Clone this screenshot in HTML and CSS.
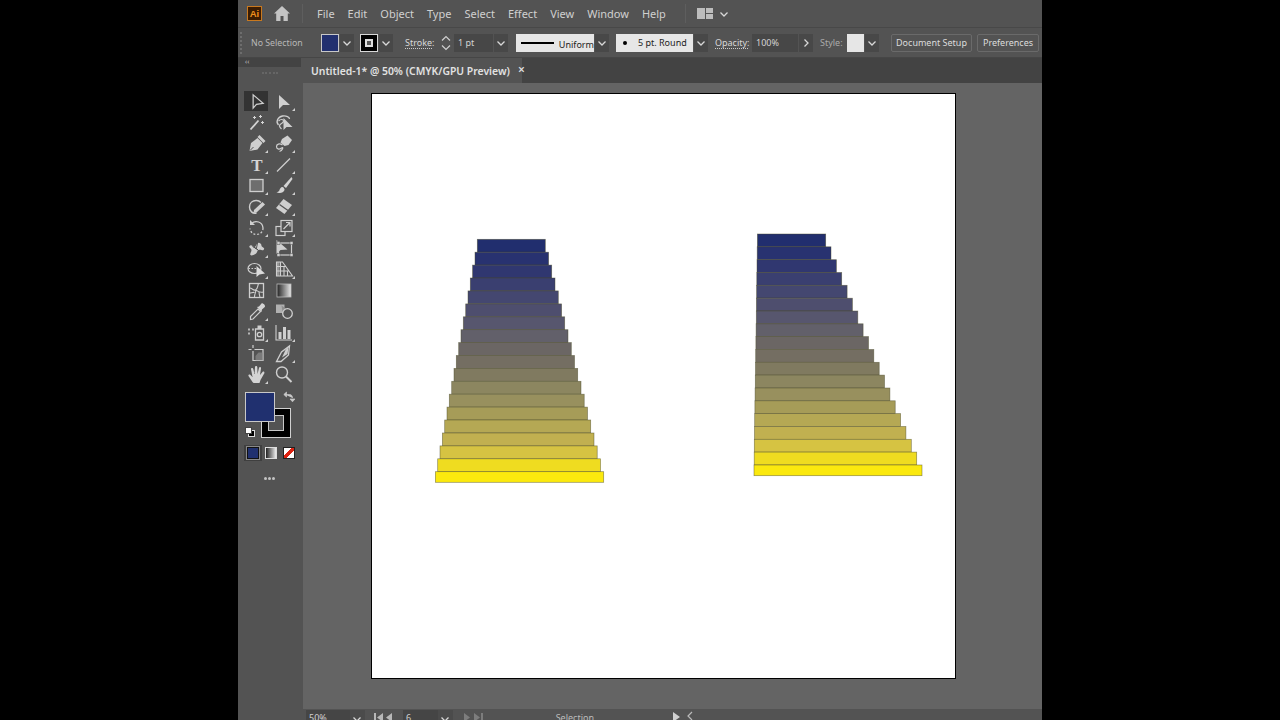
FILE: index.html
```html
<!DOCTYPE html>
<html lang="en">
<head>
<meta charset="utf-8">
<title>Adobe Illustrator</title>
<link rel="stylesheet" href="styles.css">
</head>
<body>
<svg class="defs" width="0" height="0" aria-hidden="true">
  <symbol id="chev" viewBox="0 0 14 14"><path d="M3.5 5.5 7 9l3.500-3.500" fill="none" stroke="#d8d8d8" stroke-width="1.300"/></symbol>
  <linearGradient id="grad"><stop offset="0" stop-color="#222"/><stop offset="1" stop-color="#e8e8e8"/></linearGradient>
</svg>
<div class="app">
  <header class="menubar">
    <div class="ai-logo">Ai</div>
    <svg class="home" viewBox="0 0 16 15"><path d="M8 0 0 7.500h2.200V15h4.300v-5h3v5h4.300V7.500H16z" fill="#c4c4c4"/></svg>
    <span class="vsep first"></span>
    <nav class="menu"><span>File</span><span>Edit</span><span>Object</span><span>Type</span><span>Select</span><span>Effect</span><span>View</span><span>Window</span><span>Help</span></nav>
    <span class="vsep second"></span>
    <svg class="layout" viewBox="0 0 16 11"><path d="M0 0h8v11H0zM9 0h7v5H9zM9 6h7v5H9z" fill="#bdbdbd"/></svg>
    <svg class="chev"><use href="#chev"/></svg>
  </header>

  <section class="controlbar">
    <span class="grip"></span>
    <span class="label nosel">No Selection</span>
    <span class="swatch fillswatch"></span>
    <span class="drop"><svg class="chev"><use href="#chev"/></svg></span>
    <span class="swatch strokeswatch"><i></i></span>
    <span class="drop"><svg class="chev"><use href="#chev"/></svg></span>
    <span class="label dotted strokelabel">Stroke:</span>
    <svg class="stepper" viewBox="0 0 12 18"><path d="M2 6.500 6 2.500l4 4M2 11.500l4 4 4-4" fill="none" stroke="#d0d0d0" stroke-width="1.200"/></svg>
    <span class="field w39">1 pt</span>
    <span class="drop"><svg class="chev"><use href="#chev"/></svg></span>
    <span class="lightbox uniform"><i class="strokeline"></i><span>Uniform</span></span>
    <span class="drop"><svg class="chev"><use href="#chev"/></svg></span>
    <span class="lightbox brush"><i class="dot"></i><span>5 pt. Round</span></span>
    <span class="drop"><svg class="chev"><use href="#chev"/></svg></span>
    <span class="label dotted opacity">Opacity:</span>
    <span class="field w45">100%</span>
    <span class="drop"><svg class="chev" viewBox="0 0 14 14"><path d="M5.500 3.500 9 7l-3.500 3.500" fill="none" stroke="#d8d8d8" stroke-width="1.300"/></svg></span>
    <span class="label stylelabel">Style:</span>
    <span class="swatch styleswatch"></span>
    <span class="drop"><svg class="chev"><use href="#chev"/></svg></span>
    <button class="btn docsetup">Document Setup</button>
    <button class="btn prefs">Preferences</button>
  </section>

  <div class="workspace">
    <aside class="tools">
      <div class="paneltop">‹‹</div>
      <div class="panelgrip"></div>
      <div class="toolgrid">
        <div class="tool active"><svg viewBox="-2.500 0 24 21"><path d="M6.500 4v14l3.500-4 7-1z" fill="none" stroke="#d0d0d0" stroke-width="1.300"/></svg></div>
        <div class="tool fly"><svg viewBox="-2.500 0 24 21"><path d="M5.500 4v14l4-4h7z" fill="#cfcfcf"/></svg></div>

        <div class="tool"><svg viewBox="-2.500 0 24 21"><path d="m4 17.500 8-9" stroke="#d4d4d4" stroke-width="1.800"/><path d="M8 4v3M6.500 5.500h3M14 3v3M12.500 4.500h3M16 9v3M14.500 10.500h3" stroke="#d4d4d4"/></svg></div>
        <div class="tool"><svg viewBox="-2.500 0 24 21"><path d="M5 13c-3-3-1-8 4-9 4-.5 7 1 7 3" fill="none" stroke="#cfcfcf" stroke-width="1.300"/><path d="M5 9c2-2 5-2 5 0 0 3-4 2-4 5 0 1 1 2 2 3" fill="none" stroke="#cfcfcf" stroke-width="1.200"/><path d="M10 6v12l3-3h6z" fill="#cfcfcf"/></svg></div>

        <div class="tool fly"><svg viewBox="-2.500 0 24 21"><path d="M3 18 4.500 10 11 5l5 5-5 6.500zM11 4l2-2 6 6-2 2z" fill="#cfcfcf"/><path d="m3.500 17.500 3.500-3.500" stroke="#535353"/></svg></div>
        <div class="tool fly"><svg viewBox="-2.500 0 24 21"><path d="M7 9.500 8.500 6 14 2.500 18.500 7 15 12l-4 1z" fill="#cfcfcf"/><path d="M9 12c-3-2-6-1-6 1.500S5.500 17 8 15s1 3-2 3.500" fill="none" stroke="#cfcfcf" stroke-width="1.200"/></svg></div>

        <div class="tool fly"><svg viewBox="-2.500 0 24 21"><text x="10.500" y="16.500" class="ticon">T</text></svg></div>
        <div class="tool fly"><svg viewBox="-2.500 0 24 21"><path d="m3.500 17.500 13-13" stroke="#cfcfcf" stroke-width="1.200"/></svg></div>

        <div class="tool fly"><svg viewBox="-2.500 0 24 21"><rect x="3.500" y="4.500" width="13" height="12" fill="#6e6e6e" stroke="#cfcfcf" stroke-width="1.300"/></svg></div>
        <div class="tool fly"><svg viewBox="-2.500 0 24 21"><path d="M18 2 10 11l2.500 2L19 4z" fill="#d4d4d4"/><path d="M9 12c-2 0-2.500 2-3 3-.5 1.500-1.500 2-3 2 2 1.500 7 1.500 8-2 .3-1-1-3-2-3z" fill="#d4d4d4"/></svg></div>

        <div class="tool fly"><svg viewBox="-2.500 0 24 21"><path d="M10 17c-4 1-7-2-7-6s3-6.500 7-6.500c2 0 3.500 1 4.500 2" fill="none" stroke="#cfcfcf" stroke-width="1.400"/><path d="m7 17 .5-3L16 6l2.500 2.500-8.500 8z" fill="#cfcfcf"/></svg></div>
        <div class="tool fly"><svg viewBox="-2.500 0 24 21"><path d="M10 3 18.500 9 11 18 2.500 12z" fill="#cfcfcf"/><path d="m6 8.500 8.500 6" stroke="#535353" stroke-width="1.200"/><path d="m4.500 12 6.500 4.500L16.500 9.700 10 5z" fill="none"/></svg></div>

        <div class="tool fly"><svg viewBox="-2.500 0 24 21"><path d="M5 6.500C9 3 16 4.500 16.500 11" fill="none" stroke="#cfcfcf" stroke-width="1.300"/><path d="M3.500 3v5h5z" fill="#cfcfcf"/><path d="M16.500 11c0 4-3 6.500-6.500 6.500S4 15 3.500 11.500" fill="none" stroke="#cfcfcf" stroke-width="1.300" stroke-dasharray="2 1.800"/></svg></div>
        <div class="tool fly"><svg viewBox="-2.500 0 24 21"><rect x="2.500" y="9.500" width="9" height="9" fill="none" stroke="#cfcfcf" stroke-width="1.200"/><rect x="7.500" y="3.500" width="11" height="11" fill="#535353" stroke="#cfcfcf" stroke-width="1.200"/><path d="m10 12 6-6M12.500 5.500h4v4" fill="none" stroke="#cfcfcf" stroke-width="1.200"/></svg></div>

        <div class="tool fly"><svg viewBox="-2.500 0 24 21"><path d="M3 8c2-2 3 1 5 1s2-5 5-4 1 3 3 4 2 2 1 3-3-1-5 0-1 3-3 4-4 2-5 1 1-3 1-5-3-2-2-4z" fill="#cfcfcf"/><path d="m6 8.500 4 2 3 3M11 5l-1 5" stroke="#535353"/></svg></div>
        <div class="tool"><svg viewBox="-2.500 0 24 21"><rect x="5" y="5" width="13" height="12" fill="none" stroke="#cfcfcf" stroke-width="1.200"/><path d="M3 2v14l4-4 7-.5z" fill="#cfcfcf"/><path d="M3.500 3.500h3v3h-3zM16.500 3.500h3v3h-3zM16.500 15.500h3v3h-3zM3.500 15.500h3v3h-3z" fill="#cfcfcf" stroke="#535353" stroke-width=".5"/></svg></div>

        <div class="tool fly"><svg viewBox="-2.500 0 24 21"><ellipse cx="8" cy="9.500" rx="6.500" ry="5" fill="none" stroke="#cfcfcf" stroke-width="1.200"/><path d="M2 9.500h12" stroke="#cfcfcf" stroke-dasharray="1.500 1.500"/><path d="M10 7v11l3-2.500 5.500-1z" fill="#dcdcdc"/></svg></div>
        <div class="tool fly"><svg viewBox="-2.500 0 24 21"><path d="M3 3v14h16L9 3zM3 7.500h9M3 12h13M7 3v14M10.500 8v9M14 12v5" fill="none" stroke="#cfcfcf" stroke-width="1.100"/><path d="M3 3h3v14H3z" fill="#cfcfcf" opacity=".55"/></svg></div>

        <div class="tool"><svg viewBox="-2.500 0 24 21"><rect x="3" y="3.500" width="14" height="14" fill="none" stroke="#cfcfcf" stroke-width="1.300"/><path d="M3 8c3 0 3.500 3 6 2s2-4 3-6.500M9 10c1 2-1 3-1 7M9 10c3 1 3 3 8 2M12.500 11.500c0 2 .5 4 1 6M3 13c2 0 3-1 5-.5" fill="none" stroke="#cfcfcf" stroke-width="1.100"/></svg></div>
        <div class="tool"><svg viewBox="-2.500 0 24 21"><rect x="3.500" y="4" width="14" height="13" fill="url(#grad)" stroke="#bbb" stroke-width=".8"/></svg></div>

        <div class="tool fly"><svg viewBox="-2.500 0 24 21"><path d="m4 15.500 7.500-7.500 2.500 2.500L6.500 18 4 18.500z" fill="none" stroke="#cfcfcf" stroke-width="1.200"/><path d="m10.500 6 2-.5 2.500-3c1-1 4.500 2 3.300 3.500l-2.800 2.500-.5 2.500z" fill="#d4d4d4"/></svg></div>
        <div class="tool"><svg viewBox="-2.500 0 24 21"><rect x="2.500" y="3.500" width="8.500" height="8.500" fill="#b0b0b0"/><path d="m8 4.500 5 3.500v6l-4-3z" fill="#8f8f8f"/><circle cx="14" cy="12.500" r="4.800" fill="#535353" stroke="#d0d0d0" stroke-width="1.300"/></svg></div>

        <div class="tool fly"><svg viewBox="-2.500 0 24 21"><path d="M1.500 6.500h2v2h-2zM5.500 6.500h2v2h-2zM1.500 10.500h2v2h-2z" fill="#cfcfcf" opacity=".8"/><path d="M9 7h8v11H9z" fill="none" stroke="#cfcfcf" stroke-width="1.300"/><path d="M11 3.500h4V7h-4z" fill="#cfcfcf"/><circle cx="13" cy="12.500" r="2.200" fill="none" stroke="#cfcfcf" stroke-width="1.300"/></svg></div>
        <div class="tool fly"><svg viewBox="-2.500 0 24 21"><path d="M2.500 3v15h16" fill="none" stroke="#cfcfcf" stroke-width="1.100"/><path d="M5 10h3v7H5zM9.500 5h3v12h-3zM14 8h3v9h-3z" fill="#cfcfcf"/></svg></div>

        <div class="tool"><svg viewBox="-2.500 0 24 21"><path d="M6.500 2v3M2 6.500h3M8 6.500h8.500v11H6.500V8" fill="none" stroke="#cfcfcf" stroke-width="1.200"/><path d="M12 9.500h4.500v8H9v-4.500" fill="#8c8c8c" opacity=".7"/></svg></div>
        <div class="tool fly"><svg viewBox="-2.500 0 24 21"><path d="M3 18.500 8 9l8-6-1 9-7.500 6.500z" fill="none" stroke="#cfcfcf" stroke-width="1.300"/><path d="M12 7l-3.500 7.500 5.500-3.500 1-7z" fill="#cfcfcf"/></svg></div>

        <div class="tool fly"><svg viewBox="-2.500 0 24 21"><path d="M6 18 2 12c-.5-1 1-2 2-1l2 2-1.500-8c0-1.500 2-1.500 2.300 0L8 10l.5-7c0-1.500 2.300-1.500 2.300 0l.2 7 1.500-6c.3-1.500 2.300-1 2 .5L13.500 11l2.500-3c1-1 2.500 0 1.700 1.500L14 16l-1 3H7z" fill="#d4d4d4"/></svg></div>
        <div class="tool"><svg viewBox="-2.500 0 24 21"><circle cx="8.500" cy="8.500" r="5.500" fill="none" stroke="#cfcfcf" stroke-width="1.400"/><path d="m12.500 12.500 5.500 5.500" stroke="#cfcfcf" stroke-width="2"/></svg></div>
      </div>

      <div class="fillstroke">
        <span class="strokebig"><i></i></span>
        <span class="fillbig"></span>
        <svg class="swap" viewBox="0 0 12 12"><path d="M2 3.500h4.500c2 0 3 1.500 3 3.500M.8 3.500 3.500 1v5zM9.500 10.800 7 8h5z" fill="#c8c8c8" stroke="#c8c8c8" stroke-width=".7"/></svg>
        <span class="defaults"><i></i><b></b></span>
      </div>

      <div class="modes">
        <span class="mode on"><i class="m1"></i></span>
        <span class="mode"><i class="m2"></i></span>
        <span class="mode"><i class="m3"></i></span>
      </div>
      <div class="more"><i></i><i></i><i></i></div>
    </aside>

    <main class="doc">
      <div class="tabs"><div class="tab"><span>Untitled-1* @ 50% (CMYK/GPU Preview)</span><em>×</em></div></div>
      <div class="canvas">
        <div class="artboard">
          <svg class="art" viewBox="372 94 583 584">
            <g class="steps">
              <rect class="s0" x="477.3" y="239.3" width="68" height="12.91"/>
              <rect class="s1" x="475" y="252.2" width="73.6" height="12.91"/>
              <rect class="s2" x="472.6" y="265.1" width="79.1" height="12.91"/>
              <rect class="s3" x="470.3" y="278" width="84.7" height="12.91"/>
              <rect class="s4" x="468" y="290.9" width="90.3" height="12.91"/>
              <rect class="s5" x="465.7" y="303.9" width="95.9" height="12.91"/>
              <rect class="s6" x="463.3" y="316.8" width="101.4" height="12.91"/>
              <rect class="s7" x="461" y="329.7" width="107" height="12.91"/>
              <rect class="s8" x="458.7" y="342.6" width="112.6" height="12.91"/>
              <rect class="s9" x="456.3" y="355.5" width="118.2" height="12.91"/>
              <rect class="s10" x="454" y="368.4" width="123.7" height="12.91"/>
              <rect class="s11" x="451.7" y="381.3" width="129.3" height="12.91"/>
              <rect class="s12" x="449.3" y="394.2" width="134.9" height="12.91"/>
              <rect class="s13" x="447" y="407.1" width="140.5" height="12.91"/>
              <rect class="s14" x="444.7" y="420" width="146" height="12.91"/>
              <rect class="s15" x="442.4" y="433" width="151.6" height="12.91"/>
              <rect class="s16" x="440" y="445.9" width="157.2" height="12.91"/>
              <rect class="s17" x="437.7" y="458.8" width="162.8" height="12.91"/>
              <rect class="s18" x="435.4" y="471.7" width="168.3" height="10.6"/>
            </g>
            <g class="steps">
              <rect class="s0" x="757.4" y="234" width="68.3" height="12.83"/>
              <rect class="s1" x="757.2" y="246.8" width="73.8" height="12.83"/>
              <rect class="s2" x="757" y="259.7" width="79.4" height="12.83"/>
              <rect class="s3" x="756.8" y="272.5" width="84.9" height="12.83"/>
              <rect class="s4" x="756.6" y="285.3" width="90.5" height="12.83"/>
              <rect class="s5" x="756.4" y="298.2" width="96" height="12.83"/>
              <rect class="s6" x="756.3" y="311" width="101.5" height="12.83"/>
              <rect class="s7" x="756.1" y="323.8" width="107" height="12.83"/>
              <rect class="s8" x="755.9" y="336.6" width="112.6" height="12.83"/>
              <rect class="s9" x="755.7" y="349.5" width="118.1" height="12.83"/>
              <rect class="s10" x="755.5" y="362.3" width="123.7" height="12.83"/>
              <rect class="s11" x="755.3" y="375.1" width="129.2" height="12.83"/>
              <rect class="s12" x="755.1" y="388" width="134.8" height="12.83"/>
              <rect class="s13" x="754.9" y="400.8" width="140.3" height="12.83"/>
              <rect class="s14" x="754.7" y="413.6" width="145.9" height="12.83"/>
              <rect class="s15" x="754.5" y="426.5" width="151.4" height="12.83"/>
              <rect class="s16" x="754.3" y="439.3" width="157" height="12.83"/>
              <rect class="s17" x="754.2" y="452.1" width="162.5" height="12.83"/>
              <rect class="s18" x="754" y="465" width="168" height="10.7"/>
            </g>
          </svg>
        </div>
      </div>
      <footer class="status">
        <span class="sfield zoomf">50%</span>
        <span class="sdrop"><svg class="chev"><use href="#chev"/></svg></span>
        <svg class="nav navl" viewBox="0 0 24 10"><path d="M2 1h2v9H2zM11 1v9L5 5.500zM20 1v9l-6-4.500z" fill="#b8b8b8"/></svg>
        <span class="sfield pagef">6</span>
        <span class="sdrop"><svg class="chev"><use href="#chev"/></svg></span>
        <svg class="nav navr" viewBox="0 0 24 10"><path d="M4 1v9l6-4.500zM14 1v9l6-4.500zM21 1h2v9h-2z" fill="#7d7d7d"/></svg>
        <span class="mode-name">Selection</span>
        <svg class="play" viewBox="0 0 8 10"><path d="M1 0v10l7-5z" fill="#d0d0d0"/></svg>
        <svg class="back" viewBox="0 0 8 10"><path d="M6 1 2 5l4 4" fill="none" stroke="#bbb" stroke-width="1.200"/></svg>
      </footer>
    </main>
  </div>
</div>
</body>
</html>
```
FILE: styles.css
```css
* { box-sizing: border-box; }
html, body { margin: 0; height: 100%; background: #000; overflow: hidden; }
body { font-family: "Noto Sans", "Open Sans", sans-serif; }
.defs { position: absolute; }
.app { width: 804px; height: 720px; margin: 0 auto; background: #535353; display: flex; flex-direction: column; overflow: hidden; color: #d4d4d4; }

/* menu bar */
.menubar { height: 28px; flex: none; display: flex; align-items: center; padding-left: 9px; border-bottom: 1px solid #484848; }
.ai-logo { width: 15px; height: 15px; background: #3b1c02; border: 1px solid #c9791f; color: #f0921e; font: 700 9.5px/13px "Liberation Sans", sans-serif; text-align: center; }
.home { width: 16px; height: 15px; margin-left: 12px; }
.vsep { width: 1px; height: 19px; background: #5e5e5e; }
.vsep.first { margin-left: 12px; }
.vsep.second { margin-left: 19px; }
.menu { display: flex; gap: 13px; margin-left: 14px; font-size: 11px; color: #d0d0d0; }
.layout { width: 16px; height: 11px; margin-left: 11px; }
.chev { width: 14px; height: 14px; display: block; flex: none; }
.menubar .chev { margin-left: 4px; }

/* control bar */
.controlbar { height: 30px; flex: none; display: flex; align-items: center; padding-left: 2px; font-size: 9px; border-bottom: 1px solid #464646; }
.grip { width: 4px; height: 22px; border-left: 2px dotted #6d6d6d; }
.label { color: #c8c8c8; }
.nosel { margin-left: 7px; width: 70px; color: #b8b8b8; font-size: 8.8px; }
.swatch { width: 18px; height: 18px; flex: none; display: block; }
.fillswatch { background: #22306f; border: 1px solid #c8c8c8; }
.strokeswatch { background: #000; border: 1px solid #d8d8d8; margin-left: 6px; padding: 4px; }
.strokeswatch i { display: block; height: 100%; border: 2px solid #ddd; background: #555; }
.drop { width: 14px; height: 18px; background: #484848; display: flex; align-items: center; justify-content: center; flex: none; margin-left: 1px; }
.dotted { border-bottom: 1px dotted #ccc; line-height: 11px; }
.strokelabel { margin-left: 12px; width: 27px; white-space: nowrap; color: #d8d8d8; }
.stepper { width: 12px; height: 18px; margin-left: 8px; }
.field { height: 18px; background: #474747; line-height: 18px; padding-left: 4px; margin-left: 2px; color: #d4d4d4; flex: none; }
.w39 { width: 39px; }
.w45 { width: 46px; margin-left: 4px; }
.lightbox { height: 18px; background: #e6e6e6; color: #222; display: flex; align-items: center; flex: none; margin-left: 8px; }
.uniform { width: 78px; padding-left: 5px; gap: 5px; }
.uniform span { padding-top: 3px; }
.strokeline { width: 35px; height: 2px; background: #000; display: block; }
.brush { width: 77px; margin-left: 7px; padding-left: 7px; }
.dot { width: 4px; height: 4px; border-radius: 50%; background: #000; margin-right: 11px; }
.opacity { margin-left: 7px; width: 33px; white-space: nowrap; color: #d8d8d8; }
.stylelabel { margin-left: 7px; width: 21px; color: #aaa; }
.styleswatch { background: #e6e6e6; margin-left: 6px; width: 17px; }
.btn { height: 18px; background: #535353; border: 1px solid #6a6a6a; border-radius: 2px; color: #dcdcdc; font: 9px "Noto Sans", sans-serif; padding: 0; flex: none; }
.docsetup { width: 81px; margin-left: 12px; }
.prefs { width: 62px; margin-left: 5px; }

/* workspace */
.workspace { flex: 1; display: flex; min-height: 0; }
.tools { width: 63px; flex: none; margin-right: 2px; background: #535353; }
.paneltop { height: 9px; background: #434343; color: #bbb; font-size: 7px; line-height: 8px; padding-left: 7px; }
.panelgrip { height: 19px; position: relative; }
.panelgrip::after { content: ""; display: block; margin: 5px auto 0; width: 16px; border-top: 2px dotted #666; }
.toolgrid { display: grid; grid-template-columns: 27px 27px; grid-auto-rows: 21px; padding-left: 6px; }
.tool { position: relative; }
.tool svg { display: block; width: 24px; height: 21px; }
.tool.active svg { background: #333; height: 20px; }
.fly::after { content: ""; position: absolute; right: 3px; bottom: 1px; border-left: 3px solid transparent; border-bottom: 3px solid #cfcfcf; }
.ticon { font: 700 17px "Liberation Serif", serif; fill: #d4d4d4; text-anchor: middle; }

.fillstroke { position: relative; height: 47px; margin: 7px 0 0 7px; width: 46px; }
.fillbig { position: absolute; left: 0; top: 0; width: 30px; height: 30px; background: #20306f; border: 1px solid #c8c8c8; }
.strokebig { position: absolute; left: 16px; top: 16px; width: 30px; height: 30px; background: #000; border: 1px solid #d0d0d0; }
.strokebig i { position: absolute; left: 6px; top: 6px; width: 16px; height: 16px; background: #535353; border: 1px solid #c8c8c8; }
.swap { position: absolute; left: 38px; top: -1px; width: 12px; height: 12px; }
.defaults { position: absolute; left: 0; top: 35px; width: 11px; height: 11px; }
.defaults i { position: absolute; left: 3px; top: 3px; width: 7px; height: 7px; background: #000; border: 1px solid #ddd; }
.defaults b { position: absolute; left: 0; top: 0; width: 7px; height: 7px; background: #fff; border: 1px solid #444; }

.modes { display: flex; gap: 0; margin: 6px 0 0 6px; }
.mode { width: 18px; height: 16px; display: flex; align-items: center; justify-content: center; }
.mode.on { background: #3f3f3f; }
.mode i { width: 12px; height: 12px; display: block; border: 1px solid #ddd; }
.m1 { background: #20306f; border-color: #111 !important; box-shadow: 0 0 0 1px #888; }
.m2 { background: linear-gradient(90deg, #222, #eee); }
.m3 { background: linear-gradient(135deg, #fff 0 38%, #d21 38% 62%, #fff 62%); border-color: #222 !important; }
.more { display: flex; justify-content: center; gap: 1px; margin-top: 16px; }
.more i { width: 3px; height: 3px; background: #c4c4c4; border-radius: 50%; }

/* document */
.doc { flex: 1; min-width: 0; display: flex; flex-direction: column; }
.tabs { height: 25px; flex: none; background: #434343; }
.tab { width: 219px; height: 25px; background: #535353; display: flex; align-items: center; padding-left: 8px; font-size: 10.4px; font-weight: 600; color: #e2e2e2; white-space: nowrap; }
.tab em { font-style: normal; margin-left: 8px; font-size: 12px; margin-top: -3px; }
.canvas { height: 626px; flex: none; background: #646464; padding: 10px 0 0 68px; }
.artboard { width: 585px; height: 586px; background: #fff; border: 1px solid #000; }
.art { display: block; width: 583px; height: 584px; }
.steps rect { stroke: #4a4a28; stroke-opacity: .6; stroke-width: .7; }
.s0 { fill: #212e6e; } .s1 { fill: #283270; } .s2 { fill: #303770; } .s3 { fill: #3a3f70; }
.s4 { fill: #444770; } .s5 { fill: #4e4e6e; } .s6 { fill: #57566e; } .s7 { fill: #62606a; }
.s8 { fill: #6b6664; } .s9 { fill: #746e62; } .s10 { fill: #807a60; } .s11 { fill: #8c8660; }
.s12 { fill: #98905e; } .s13 { fill: #a69c58; } .s14 { fill: #b5a854; } .s15 { fill: #c1b050; }
.s16 { fill: #d6c342; } .s17 { fill: #efdc20; } .s18 { fill: #fbe90e; }

/* status bar */
.status { height: 22px; flex: none; background: #535353; display: flex; align-items: flex-start; padding: 1px 0 0 3px; font-size: 9px; color: #d0d0d0; }
.sfield { height: 20px; background: #454545; line-height: 15px; padding-left: 3px; flex: none; }
.zoomf { width: 44px; }
.pagef { width: 35px; margin-left: 7px; }
.sdrop { width: 15px; height: 20px; background: #4b4b4b; flex: none; padding-top: 2px; }
.nav { width: 24px; height: 10px; margin-top: 2px; flex: none; }
.navl { margin-left: 7px; }
.navr { margin-left: 7px; }
.mode-name { width: 183px; text-align: right; padding-right: 73px; line-height: 15px; margin-left: 0; flex: none; width: 180px; padding-right: 0; text-align: right; margin-right: 78px; color: #bcbcbc; width: 110px; }
.play { width: 8px; height: 10px; margin-top: 2px; flex: none; }
.back { width: 8px; height: 10px; margin: 1px 0 0 6px; flex: none; }
```
